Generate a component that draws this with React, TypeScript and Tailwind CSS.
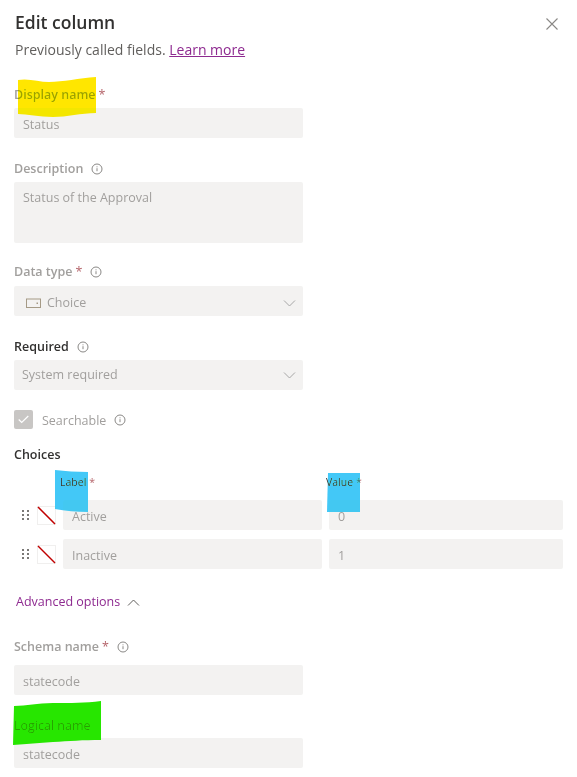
import type { ReactNode } from 'react';

const labelMuted = 'text-[12.5px] leading-[18px] font-semibold text-[#a19f9d]';
const boxBase = 'flex items-center rounded-[2px] bg-[#f3f2f1] text-[12.5px] text-[#a19f9d]';

function Star() {
  return <span className="ml-[3px] font-normal text-[#b5656b]">*</span>;
}

function InfoIcon() {
  return (
    <svg width="12" height="12" viewBox="0 0 12 12" fill="none" stroke="#8a8886" strokeWidth="1" className="ml-2 shrink-0">
      <circle cx="6" cy="6" r="5" />
      <path d="M6 5.2v3M6 3.4v.9" />
    </svg>
  );
}

function Chevron({ up = false }: { up?: boolean }) {
  return (
    <svg width="13" height="7" viewBox="0 0 13 7" fill="none" stroke={up ? '#605e5c' : '#a6a6a6'} strokeWidth="1">
      <path d={up ? 'M1 6.5l5.5-5.5 5.5 5.5' : 'M1 .5l5.5 5.5 5.5-5.5'} />
    </svg>
  );
}

function Label({ children, dark = false, star = false, info = false }: { children: ReactNode; dark?: boolean; star?: boolean; info?: boolean }) {
  return (
    <div className={dark ? 'flex h-[18px] items-center pt-[2px] text-[12.5px] font-semibold text-[#323130]' : `flex h-[18px] items-center pt-[2px] ${labelMuted}`}>
      {children}
      {star && <Star />}
      {info && <InfoIcon />}
    </div>
  );
}

function Input({ value, className = 'h-[30px] w-[289px] pt-[4px]' }: { value: string; className?: string }) {
  return <div className={`${boxBase} ${className} px-[9px]`}>{value}</div>;
}

function Select({ children, className }: { children: ReactNode; className: string }) {
  return (
    <div className={`${boxBase} ${className} h-[30px] w-[289px] justify-between pl-[8px] pr-[7px]`}>
      <div className="flex items-center">{children}</div>
      <Chevron />
    </div>
  );
}

function ChoiceRow({ label, value }: { label: string; value: string }) {
  return (
    <div className="flex items-center">
      <div className="grid w-[7px] grid-cols-2 gap-x-[3px] gap-y-[2px] ml-[8px]">
        {[0, 1, 2, 3, 4, 5].map((i) => (
          <span key={i} className="h-[2px] w-[2px] bg-[#7a7876]" />
        ))}
      </div>
      <svg width="19" height="19" viewBox="0 0 19 19" className="ml-[8px] mr-[7px] shrink-0">
        <rect x="0.5" y="0.5" width="18" height="18" fill="#fff" stroke="#f0efee" />
        <path d="M1 1l17 17" stroke="#c00000" strokeWidth="1.5" />
      </svg>
      <Input value={label} className="h-[30px] w-[259px] pt-[4px]" />
      <Input value={value} className="ml-[7px] h-[30px] w-[234px] pt-[4px]" />
    </div>
  );
}

// the hand drawn highlighter strokes on top of the screenshot
function Marker({ className, color, d, w, h }: { className: string; color: string; d: string; w: number; h: number }) {
  return (
    <svg width={w} height={h} viewBox={`0 0 ${w} ${h}`} className={`absolute mix-blend-darken ${className}`}>
      <path d={d} fill={color} />
    </svg>
  );
}

export default function App() {
  return (
    <div className="relative h-[777px] w-[577px] overflow-hidden bg-white font-['Open_Sans','Noto_Sans',sans-serif]">
      <div className="flex flex-col px-[14px]">
        <div className="mt-[10px] flex items-start justify-between">
          <h1 className="ml-px text-[17.5px] leading-[25px] font-semibold text-[#323130]">Edit column</h1>
          <svg width="12" height="12" viewBox="0 0 12 12" stroke="#8a8886" strokeWidth="1.1" className="mr-[5px] mt-[8px]">
            <path d="M.5.5l11 11M11.5.5l-11 11" />
          </svg>
        </div>
        <p className="mt-[5px] ml-px text-[14px] leading-[20px] text-[#605e5c]">
          Previously called fields. <span className="text-[#8e2a90] underline">Learn more</span>
        </p>

        <div className="mt-[25px]">
          <Label star>Display name</Label>
        </div>
        <div className="mt-[5px]">
          <Input value="Status" />
        </div>

        <div className="mt-[21px]">
          <Label info>Description</Label>
        </div>
        <div className={`${boxBase} mt-[5px] h-[61px] w-[289px] items-start px-[9px] pt-[7px]`}>Status of the Approval</div>

        <div className="mt-[19px]">
          <Label star info>Data type</Label>
        </div>
        <div className="mt-[6px]">
          <Select className="pt-[4px]">
            <svg width="16" height="11" viewBox="0 0 16 11" fill="none" className="mr-[5px] ml-[4px]">
              <rect x="0.5" y="1" width="14" height="8.5" stroke="#a59a86" />
              <rect x="10.5" y="4.5" width="1.5" height="1.5" fill="#a59a86" />
            </svg>
            Choice
          </Select>
        </div>

        <div className="mt-[21px]">
          <Label dark info>Required</Label>
        </div>
        <div className="mt-[5px]">
          <Select className="pt-[1px]">System required</Select>
        </div>

        <div className="mt-[19px] flex h-[21px] items-center">
          <div className="flex h-[19px] w-[19px] items-center justify-center rounded-[2px] bg-[#c8c6c4]">
            <svg width="11" height="9" viewBox="0 0 11 9" fill="none" stroke="#fff" strokeWidth="1.2">
              <path d="M.7 4.5l3 3L10.3 1" />
            </svg>
          </div>
          <span className="ml-[9px] pt-[4px] text-[12.5px] text-[#a19f9d]">Searchable</span>
          <InfoIcon />
        </div>

        <div className="mt-[15px]">
          <Label dark>Choices</Label>
        </div>

        <div className="mt-[12px] flex h-[18px] text-[10.5px] text-[#323130]">
          <div className="ml-[46px] w-[266px]">
            Label<Star />
          </div>
          <div>
            Value<Star />
          </div>
        </div>
        <div className="mt-[7px] flex flex-col gap-[9px]">
          <ChoiceRow label="Active" value="0" />
          <ChoiceRow label="Inactive" value="1" />
        </div>

        <div className="mt-[23px] flex h-[20px] items-center text-[12.5px] text-[#8e2a90]">
          <span className="ml-[2px]">Advanced options</span>
          <span className="ml-[7px]">
            <Chevron up />
          </span>
        </div>

        <div className="mt-[25px]">
          <Label star info>Schema name</Label>
        </div>
        <div className="mt-[10px]">
          <Input value="statecode" />
        </div>
        <div className="mt-[21px]">
          <div className="flex h-[18px] items-center pt-[2px] text-[12.5px] text-[#a19f9d]">Logical name</div>
        </div>
        <div className="mt-[4px]">
          <Input value="statecode" />
        </div>
      </div>

      <Marker className="left-[17px] top-[77px]" w={80} h={41} color="#ffe600" d="M1 3C12 1 22 5 32 5 46 5 62 1 79 0L79 36C64 36 50 40 36 40 22 40 10 37 1 37Z" />
      <Marker className="left-[55px] top-[470px]" w={34} h={43} color="#43c8f7" d="M0 0C10 1 22 2 33 2L33 42C22 42 10 41 0 39Z" />
      <Marker className="left-[327px] top-[472px]" w={34} h={41} color="#43c8f7" d="M1 1L33 1 33 40 0 40Z" />
      <Marker className="left-[13px] top-[701px]" w={89} h={44} color="#27e600" d="M1 5C14 5 24 2 40 2 58 2 72 2 88 0L88 39C70 39 56 40 40 41 26 42 14 43 0 44Z" />
    </div>
  );
}
